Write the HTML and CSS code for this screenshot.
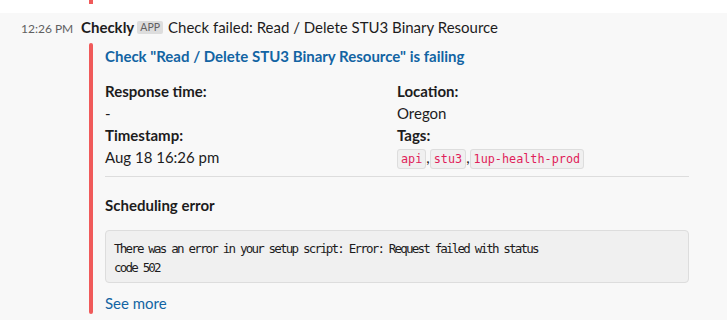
FILE: index.html
```html
<!DOCTYPE html>
<html lang="en">
<head>
    <meta charset="UTF-8">
    <meta name="viewport" content="width=device-width, initial-scale=1.0">
    <title>Checkly alert</title>
    <link rel="stylesheet" href="styles.css">
</head>
<body>
    <div class="prev">
        <div class="prev-bar"></div>
    </div>

    <div class="message">
        <div class="gutter">
            <span class="time">12:26 PM</span>
        </div>
        <div class="content">
            <div class="header">
                <span class="sender">Checkly</span>
                <span class="app-badge">APP</span>
                <span class="text">Check failed: Read / Delete STU3 Binary Resource</span>
            </div>

            <div class="attachment">
                <div class="bar"></div>
                <div class="body">
                    <a class="title" href="#">Check "Read / Delete STU3 Binary Resource" is failing</a>

                    <div class="fields">
                        <div class="field">
                            <div class="label">Response time:</div>
                            <div class="value">-</div>
                        </div>
                        <div class="field">
                            <div class="label">Location:</div>
                            <div class="value">Oregon</div>
                        </div>
                        <div class="field">
                            <div class="label">Timestamp:</div>
                            <div class="value">Aug 18 16:26 pm</div>
                        </div>
                        <div class="field">
                            <div class="label">Tags:</div>
                            <div class="value tags"><code>api</code>,<code>stu3</code>,<code>1up-health-prod</code></div>
                        </div>
                    </div>

                    <hr class="divider">

                    <div class="section-title">Scheduling error</div>
                    <pre class="code">There was an error in your setup script: Error: Request failed with status
code 502</pre>

                    <a class="see-more" href="#">See more</a>
                </div>
            </div>
        </div>
    </div>
</body>
</html>
```

FILE: styles.css
```css
body {
    margin: 0;
    font-family: 'Lato', 'Noto Sans', sans-serif;
    font-size: 15px;
    color: #1d1c1d;
    background: #ffffff;
}

.prev {
    height: 13px;
    padding-left: 89px;
}

.prev-bar {
    width: 4px;
    height: 4px;
    background: #f05a5a;
}

.message {
    display: flex;
    background: #f8f8f8;
    padding: 3px 0 6px 0;
}

.gutter {
    width: 81px;
    flex-shrink: 0;
    padding-left: 21px;
    box-sizing: border-box;
    line-height: 22px;
}

.time {
    font-size: 12px;
    color: #616061;
}

.content {
    flex: 1;
    padding-right: 38px;
}

.header {
    line-height: 22px;
    display: flex;
    align-items: center;
}

.sender {
    font-weight: 700;
}

.app-badge {
    font-size: 10.5px;
    line-height: 13px;
    padding: 0 3px;
    margin: 1px 5px 0 3px;
    background: #dddddd;
    color: #616061;
    border-radius: 2px;
}

.attachment {
    display: flex;
    margin-top: 5px;
    margin-left: 8px;
}

.bar {
    width: 4px;
    flex-shrink: 0;
    background: #f05a5a;
    border-radius: 8px;
}

.body {
    flex: 1;
    padding-left: 12px;
}

.title {
    display: block;
    color: #1264a3;
    font-weight: 700;
    text-decoration: none;
    line-height: 22px;
    padding-top: 2px;
}

.fields {
    display: grid;
    grid-template-columns: 1fr 1fr;
    margin-top: 13px;
}

.label {
    font-weight: 700;
    line-height: 22px;
}

.value {
    line-height: 22px;
}

.tags code {
    font-family: 'DejaVu Sans Mono', monospace;
    font-size: 11.8px;
    line-height: 14px;
    color: #e01e5a;
    background: #f0f0f0;
    border: 1px solid #dddddd;
    border-radius: 3px;
    padding: 2px 3px;
}

.divider {
    border: none;
    border-top: 1px solid #dddddd;
    margin: 8px 0 0 0;
}

.section-title {
    font-weight: 700;
    line-height: 22px;
    margin-top: 17px;
}

.code {
    margin: 14px 0 0 0;
    padding: 8px 8px 5px 8px;
    background: #f0f0f0;
    border: 1px solid #dddddd;
    border-radius: 4px;
    font-family: 'DejaVu Sans Mono', monospace;
    font-size: 12.5px;
    letter-spacing: -1.8px;
    line-height: 19px;
    color: #1d1c1d;
    white-space: pre-wrap;
}

.see-more {
    display: block;
    color: #1264a3;
    text-decoration: none;
    line-height: 22px;
    margin-top: 9px;
}
```
